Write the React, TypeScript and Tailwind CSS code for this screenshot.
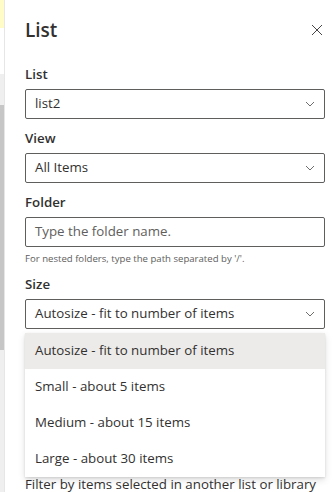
import React from "react";

const font = { fontFamily: '"Segoe UI", "Open Sans", "Liberation Sans", sans-serif' };

function Chevron() {
  return (
    <svg width="10" height="10" viewBox="0 0 10 10" fill="none" stroke="#605e5c" strokeWidth="0.9">
      <path d="M1 3 L5 7 L9 3" />
    </svg>
  );
}

function Select({ value }: { value: string }) {
  return (
    <div className="flex h-[30px] items-center justify-between rounded-[2px] border border-[#605e5c] bg-white pl-[9px] pr-[9px] text-[13.3px] text-[#323130]">
      <span>{value}</span>
      <Chevron />
    </div>
  );
}

function Label({ children }: { children: React.ReactNode }) {
  return <div className="pb-[5px] pt-[5px] text-[13.3px] font-semibold leading-5 text-[#323130]">{children}</div>;
}

const options = [
  "Autosize - fit to number of items",
  "Small - about 5 items",
  "Medium - about 15 items",
  "Large - about 30 items",
];

export default function App() {
  return (
    <div className="flex h-[492px] w-[333px] overflow-hidden bg-white" style={font}>
      <div className="flex w-[4px] flex-col">
        <div className="h-[28px] bg-[#fffcc8]" />
        <div className="h-[46px] bg-white" />
        <div className="h-[31px] bg-[#efefef]" />
        <div className="h-[245px] bg-[#c6c6c6]" />
        <div className="flex-1 bg-[#efefef]" />
      </div>
      <div className="w-px bg-[#e6e6e6]" />
      <div className="relative flex-1 pl-[20px] pr-[8px]">
        <div className="flex items-center justify-between pt-[16px]">
          <h1 className="text-[19px] font-semibold leading-7 text-[#323130]">List</h1>
          <svg className="mr-[2px]" width="12" height="12" viewBox="0 0 12 12" stroke="#323130" strokeWidth="0.9">
            <path d="M1 1 L11 11 M11 1 L1 11" />
          </svg>
        </div>
        <div className="pt-[15px]">
          <Label>List</Label>
          <Select value="list2" />
        </div>
        <div className="pt-[4px]">
          <Label>View</Label>
          <Select value="All Items" />
        </div>
        <div className="pt-[4px]">
          <Label>Folder</Label>
          <div className="flex h-[30px] items-center rounded-[2px] border border-[#605e5c] pl-[9px] text-[13.3px] text-[#605e5c]">
            Type the folder name.
          </div>
          <div className="pt-[5px] text-[9.6px] text-[#605e5c]">For nested folders, type the path separated by '/'.</div>
        </div>
        <div className="pt-[3px]">
          <Label>Size</Label>
          <Select value="Autosize - fit to number of items" />
        </div>
        <div className="whitespace-nowrap pt-[146px] text-[13.3px] text-[#323130]">Filter by items selected in another list or library</div>
        <div className="absolute left-[20px] right-[8px] top-[333px] bg-white shadow-[0_3px_7px_rgba(0,0,0,0.13),0_1px_2px_rgba(0,0,0,0.11)]">
          {options.map((o, i) => (
            <div
              key={o}
              className={`flex h-[36px] items-center pl-[10px] text-[13.3px] text-[#323130] ${i === 0 ? "bg-[#edebe9]" : ""}`}
            >
              {o}
            </div>
          ))}
        </div>
      </div>
    </div>
  );
}
